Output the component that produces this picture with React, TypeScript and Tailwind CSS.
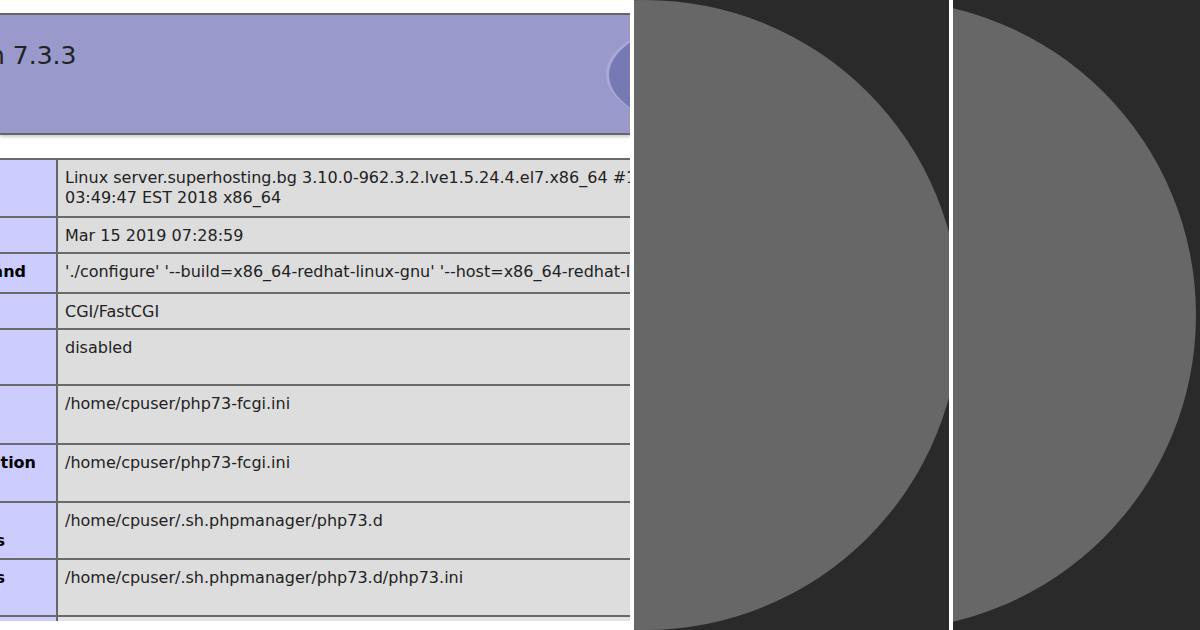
type Row = {
  h: string;
  label?: { text: string; end: string; line?: number };
  value: string[];
};

const rows: Row[] = [
  {
    h: 'h-[58px]',
    value: [
      'Linux server.superhosting.bg 3.10.0-962.3.2.lve1.5.24.4.el7.x86_64 #1 SMP Thu Dec 27',
      '03:49:47 EST 2018 x86_64',
    ],
  },
  { h: 'h-[36px]', value: ['Mar 15 2019 07:28:59'] },
  {
    h: 'h-[40px]',
    label: { text: 'Configure Command', end: 'w-[26px]' },
    value: [
      "'./configure' '--build=x86_64-redhat-linux-gnu' '--host=x86_64-redhat-linux-gnu' '--target=x86_64'",
    ],
  },
  { h: 'h-[36px]', value: ['CGI/FastCGI'] },
  { h: 'h-[56px]', value: ['disabled'] },
  { h: 'h-[59px]', value: ['/home/cpuser/php73-fcgi.ini'] },
  {
    h: 'h-[58px]',
    label: { text: 'Loaded Configuration', end: 'w-[36px]' },
    value: ['/home/cpuser/php73-fcgi.ini'],
  },
  {
    h: 'h-[57px]',
    label: { text: 'files', end: 'w-[5px]', line: 2 },
    value: ['/home/cpuser/.sh.phpmanager/php73.d'],
  },
  {
    h: 'h-[57px]',
    label: { text: 'Additional .ini files', end: 'w-[5px]' },
    value: ['/home/cpuser/.sh.phpmanager/php73.d/php73.ini'],
  },
];

function PhpLogo() {
  return (
    <svg width="30" height="118" className="absolute left-[600px] top-0">
      <ellipse cx="116" cy="59" rx="110" ry="55" fill="#a9a9d7" />
      <ellipse cx="118" cy="60" rx="109" ry="55" fill="#7779b4" />
    </svg>
  );
}

function InfoRow({ row }: { row: Row }) {
  return (
    <div className={`flex border-t-2 border-[#6a6a6a] ${row.h}`}>
      <div className="w-[58px] shrink-0 bg-[#ccccff] border-r-2 border-[#666] overflow-hidden pt-[8px] font-bold text-black leading-[20px]">
        {row.label && row.label.line === 2 && <div className="h-[20px]" />}
        {row.label && (
          <div className={`flex justify-end whitespace-nowrap ${row.label.end}`}>
            {row.label.text}
          </div>
        )}
      </div>
      <div className="flex-1 min-w-0 bg-[#dddddd] pl-[7px] pt-[8px] text-[#222] leading-[20px] overflow-hidden">
        {row.value.map((v, i) => (
          <div key={i} className="whitespace-nowrap">
            {v}
          </div>
        ))}
      </div>
    </div>
  );
}

function PhpInfo() {
  return (
    <div className="w-[630px] shrink-0 h-full overflow-hidden bg-white pt-[13px] text-[16px] font-['DejaVu_Sans',sans-serif]">
      {/* header */}
      <div className="relative h-[122px] bg-[#9999cc] border-y-2 border-[#666] shadow-[0_2px_3px_#ccc] overflow-hidden">
        <div className="pt-[26px] -ml-[144px] text-[25px] leading-[30px] text-[#222] whitespace-nowrap">
          PHP Version 7.3.3
        </div>
        <PhpLogo />
      </div>

      {/* table */}
      <div className="mt-[23px]">
        {rows.map((r, i) => (
          <InfoRow key={i} row={r} />
        ))}
        <div className="flex h-[6px] border-t-2 border-[#6a6a6a]">
          <div className="w-[58px] bg-[#ccccff] border-r-2 border-[#666]" />
          <div className="flex-1 bg-[#e4e4e4]" />
        </div>
      </div>
    </div>
  );
}

function ArcPanel({ w, cx }: { w: string; cx: number }) {
  return (
    <div className={`${w} shrink-0 h-full bg-[#2a2a2a] overflow-hidden`}>
      <svg width="315" height="630">
        <circle cx={cx} cy="315" r="315" fill="#676767" />
      </svg>
    </div>
  );
}

export default function App() {
  return (
    <div className="flex w-[1200px] h-[630px] bg-white overflow-hidden">
      <PhpInfo />
      <div className="w-[4px] shrink-0" />
      <ArcPanel w="w-[315px]" cx={11} />
      <div className="w-[4px] shrink-0" />
      <ArcPanel w="w-[247px]" cx={-72} />
    </div>
  );
}
